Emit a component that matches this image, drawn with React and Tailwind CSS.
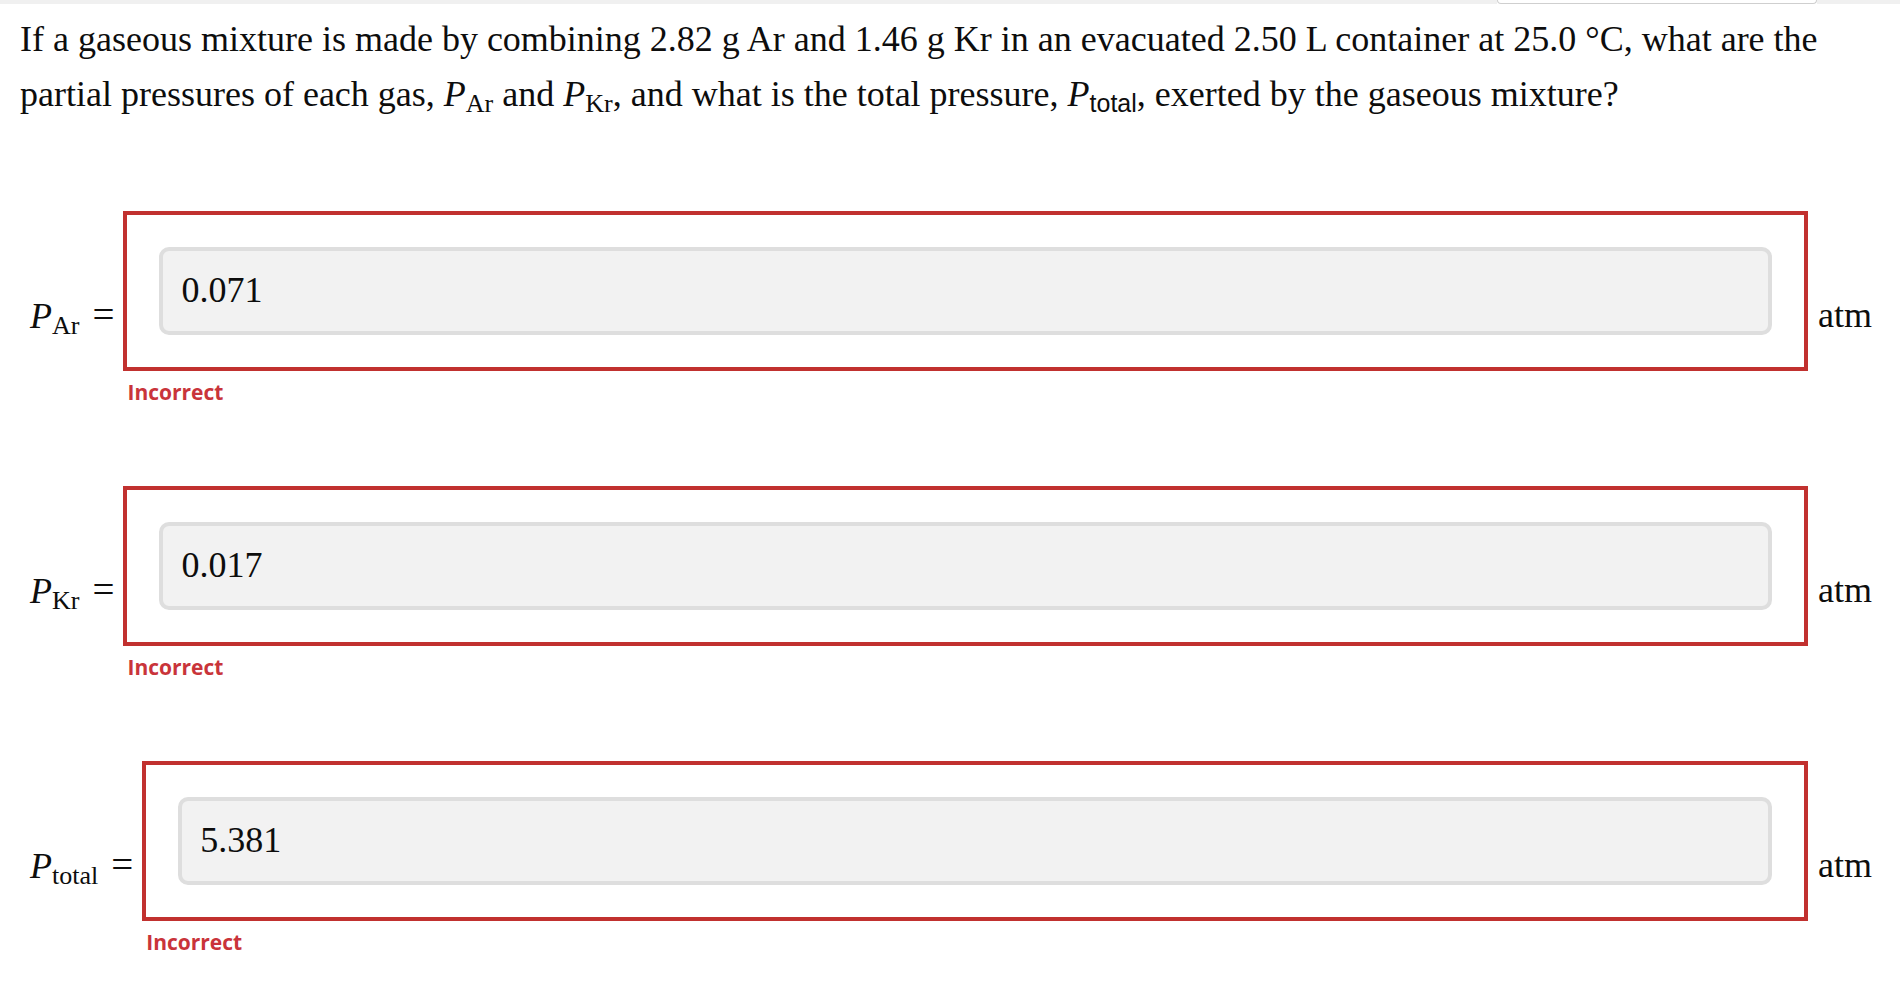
const serif = { fontFamily: '"Liberation Serif", "Times New Roman", serif' };

const Sub = ({ children, sans }) => (
  <span
    className={`relative top-[6px] leading-none ${sans ? 'text-[25px]' : 'text-[26px]'}`}
    style={sans ? { fontFamily: '"Liberation Sans", Arial, sans-serif' } : undefined}
  >
    {children}
  </span>
);

const Row = ({ sub, value }) => (
  <div className="flex items-start">
    <div className="mt-[84px] pr-[9px] text-[36px] leading-[40px] whitespace-nowrap">
      <i>P</i>
      <Sub>{sub}</Sub>
      <span className="ml-[13px] text-[39px]">=</span>
    </div>
    <div className="flex-1 flex flex-col">
      <div className="border-4 border-[#c1312f] p-[32px]">
        <div className="h-[88px] rounded-[10px] border-4 border-[#dedede] bg-[#f2f2f2] pl-[18px] pb-[2px] flex items-center text-[36px]">
          {value}
        </div>
      </div>
      <div
        className="mt-[6px] pl-[4px] text-[21px] leading-[30px] font-bold text-[#c9343a]"
        style={{ fontFamily: '"Open Sans", sans-serif' }}
      >
        Incorrect
      </div>
    </div>
    <div className="w-[92px] pl-[10px] mt-[84px] text-[36px] leading-[40px]">atm</div>
  </div>
);

export default function App() {
  return (
    <div className="min-h-screen bg-white text-[#0d0d0d]" style={serif}>
      <div className="flex h-[4px]">
        <div className="flex-1 bg-[#f0f0f0]" />
        <div className="w-[320px] bg-white border-x border-b border-[#cfcfcf] rounded-b-[5px]" />
        <div className="w-[83px] bg-[#f0f0f0]" />
      </div>
      <div className="pl-[20px] pt-[8px] text-[36px] leading-[55px]">
        If a gaseous mixture is made by combining 2.82 g Ar and 1.46 g Kr in an evacuated 2.50 L container at 25.0 °C, what are the
        <br />
        partial pressures of each gas, <i>P</i><Sub>Ar</Sub> and <i>P</i><Sub>Kr</Sub>, and what is the total pressure,{' '}
        <i>P</i><Sub sans>total</Sub>, exerted by the gaseous mixture?
      </div>
      <div className="pl-[30px] mt-[89px] flex flex-col">
        <Row sub="Ar" value="0.071" />
        <div className="mt-[79px]">
          <Row sub="Kr" value="0.017" />
        </div>
        <div className="mt-[79px]">
          <Row sub="total" value="5.381" />
        </div>
      </div>
    </div>
  );
}
